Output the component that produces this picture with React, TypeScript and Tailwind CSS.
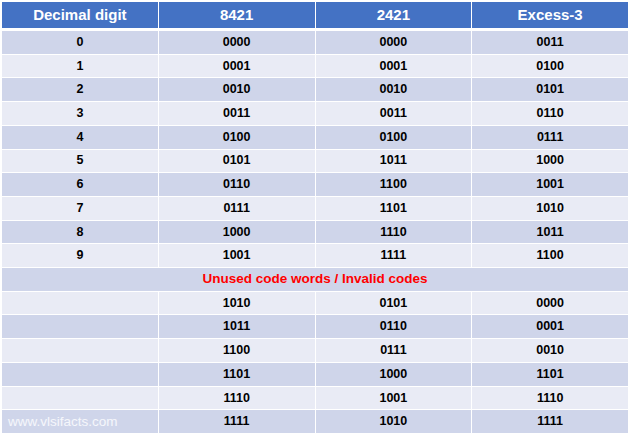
import React from "react";

const rows: [string, string, string, string][] = [
  ["0", "0000", "0000", "0011"],
  ["1", "0001", "0001", "0100"],
  ["2", "0010", "0010", "0101"],
  ["3", "0011", "0011", "0110"],
  ["4", "0100", "0100", "0111"],
  ["5", "0101", "1011", "1000"],
  ["6", "0110", "1100", "1001"],
  ["7", "0111", "1101", "1010"],
  ["8", "1000", "1110", "1011"],
  ["9", "1001", "1111", "1100"],
];

const unused: [string, string, string, string][] = [
  ["", "1010", "0101", "0000"],
  ["", "1011", "0110", "0001"],
  ["", "1100", "0111", "0010"],
  ["", "1101", "1000", "1101"],
  ["", "1110", "1001", "1110"],
  ["", "1111", "1010", "1111"],
];

function Row({ cells, dark, mark }: { cells: [string, string, string, string]; dark: boolean; mark?: boolean }) {
  const bg = dark ? "bg-[#cfd5ea]" : "bg-[#e9ebf5]";
  return (
    <div className="grid grid-cols-4 gap-x-px flex-1">
      {cells.map((c, i) => (
        <div key={i} className={`${bg} flex items-center justify-center relative text-[12.5px] font-bold text-black`}>
          {c}
          {mark && i === 0 && (
            <span className="absolute left-[6px] top-1/2 -translate-y-1/2 font-normal text-[13.5px] text-white/80">
              www.vlsifacts.com
            </span>
          )}
        </div>
      ))}
    </div>
  );
}

export default function App() {
  return (
    <div
      className="w-[630px] h-[435px] bg-white px-[2px] pt-[2px] pb-[2px] flex flex-col"
      style={{ fontFamily: '"Liberation Sans", Arial, sans-serif' }}
    >
      <div className="grid grid-cols-4 gap-x-px h-[26px] shrink-0">
        {["Decimal digit", "8421", "2421", "Excess-3"].map((h) => (
          <div key={h} className="bg-[#4472c4] flex items-center justify-center text-white font-bold text-[15px]">
            {h}
          </div>
        ))}
      </div>
      <div className="flex flex-col gap-y-px flex-1 mt-[3px]">
        {rows.map((r, i) => (
          <Row key={i} cells={r} dark={i % 2 === 0} />
        ))}
        <div className="flex-1 bg-[#cfd5ea] flex items-center justify-center text-[#ff0000] font-bold text-[13.5px]">
          Unused code words / Invalid codes
        </div>
        {unused.map((r, i) => (
          <Row key={i} cells={r} dark={i % 2 === 1} mark={i === unused.length - 1} />
        ))}
      </div>
    </div>
  );
}
